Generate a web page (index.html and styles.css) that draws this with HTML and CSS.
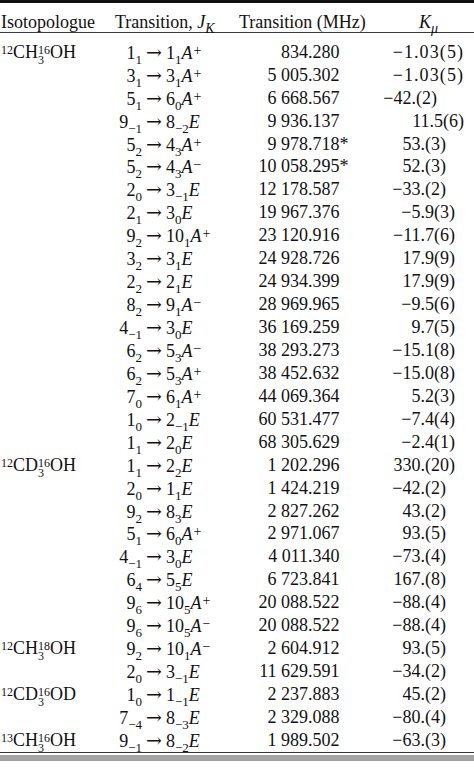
FILE: index.html
```html
<!DOCTYPE html>
<html>
<head>
<meta charset="utf-8">
<link rel="stylesheet" href="styles.css">
</head>
<body>
<div class="table">
  <div class="rule-top"></div>
  <div class="row head">
    <div class="c iso">Isotopologue</div>
    <div class="c trh">Transition, <i>J</i><sub class="hs"><i>K</i></sub></div>
    <div class="c fqh">Transition (MHz)</div>
    <div class="c kh"><i>K</i><sub class="hs"><i>μ</i></sub></div>
  </div>
  <div class="body">
    <div class="row"><div class="c iso"><sup>12</sup>CH<sub class="z">3</sub><sup>16</sup>OH</div><div class="c tr"><span class="jl">1<sub>1</sub></span><span class="ar">→</span>1<sub>1</sub><i>A</i><sup class="sg">+</sup></div><div class="c fq"><span class="ni">834</span>.280</div><div class="c k wide"><span class="ki">−1</span>.03(5)</div></div>
    <div class="row"><div class="c iso"></div><div class="c tr"><span class="jl">3<sub>1</sub></span><span class="ar">→</span>3<sub>1</sub><i>A</i><sup class="sg">+</sup></div><div class="c fq"><span class="ni">5 005</span>.302</div><div class="c k wide"><span class="ki">−1</span>.03(5)</div></div>
    <div class="row"><div class="c iso"></div><div class="c tr"><span class="jl">5<sub>1</sub></span><span class="ar">→</span>6<sub>0</sub><i>A</i><sup class="sg">+</sup></div><div class="c fq"><span class="ni">6 668</span>.567</div><div class="c k kl"><span class="ki">−42</span>.(2)</div></div>
    <div class="row"><div class="c iso"></div><div class="c tr"><span class="jl">9<sub>−1</sub></span><span class="ar">→</span>8<sub>−2</sub><i>E</i></div><div class="c fq"><span class="ni">9 936</span>.137</div><div class="c k kr"><span class="ki">11</span>.5(6)</div></div>
    <div class="row"><div class="c iso"></div><div class="c tr"><span class="jl">5<sub>2</sub></span><span class="ar">→</span>4<sub>3</sub><i>A</i><sup class="sg">+</sup></div><div class="c fq"><span class="ni">9 978</span>.718*</div><div class="c k"><span class="ki">53</span>.(3)</div></div>
    <div class="row"><div class="c iso"></div><div class="c tr"><span class="jl">5<sub>2</sub></span><span class="ar">→</span>4<sub>3</sub><i>A</i><sup class="sg">−</sup></div><div class="c fq"><span class="ni">10 058</span>.295*</div><div class="c k"><span class="ki">52</span>.(3)</div></div>
    <div class="row"><div class="c iso"></div><div class="c tr"><span class="jl">2<sub>0</sub></span><span class="ar">→</span>3<sub>−1</sub><i>E</i></div><div class="c fq"><span class="ni">12 178</span>.587</div><div class="c k"><span class="ki">−33</span>.(2)</div></div>
    <div class="row"><div class="c iso"></div><div class="c tr"><span class="jl">2<sub>1</sub></span><span class="ar">→</span>3<sub>0</sub><i>E</i></div><div class="c fq"><span class="ni">19 967</span>.376</div><div class="c k"><span class="ki">−5</span>.9(3)</div></div>
    <div class="row"><div class="c iso"></div><div class="c tr"><span class="jl">9<sub>2</sub></span><span class="ar">→</span>10<sub>1</sub><i>A</i><sup class="sg">+</sup></div><div class="c fq"><span class="ni">23 120</span>.916</div><div class="c k"><span class="ki">−11</span>.7(6)</div></div>
    <div class="row"><div class="c iso"></div><div class="c tr"><span class="jl">3<sub>2</sub></span><span class="ar">→</span>3<sub>1</sub><i>E</i></div><div class="c fq"><span class="ni">24 928</span>.726</div><div class="c k"><span class="ki">17</span>.9(9)</div></div>
    <div class="row"><div class="c iso"></div><div class="c tr"><span class="jl">2<sub>2</sub></span><span class="ar">→</span>2<sub>1</sub><i>E</i></div><div class="c fq"><span class="ni">24 934</span>.399</div><div class="c k"><span class="ki">17</span>.9(9)</div></div>
    <div class="row"><div class="c iso"></div><div class="c tr"><span class="jl">8<sub>2</sub></span><span class="ar">→</span>9<sub>1</sub><i>A</i><sup class="sg">−</sup></div><div class="c fq"><span class="ni">28 969</span>.965</div><div class="c k"><span class="ki">−9</span>.5(6)</div></div>
    <div class="row"><div class="c iso"></div><div class="c tr"><span class="jl">4<sub>−1</sub></span><span class="ar">→</span>3<sub>0</sub><i>E</i></div><div class="c fq"><span class="ni">36 169</span>.259</div><div class="c k"><span class="ki">9</span>.7(5)</div></div>
    <div class="row"><div class="c iso"></div><div class="c tr"><span class="jl">6<sub>2</sub></span><span class="ar">→</span>5<sub>3</sub><i>A</i><sup class="sg">−</sup></div><div class="c fq"><span class="ni">38 293</span>.273</div><div class="c k"><span class="ki">−15</span>.1(8)</div></div>
    <div class="row"><div class="c iso"></div><div class="c tr"><span class="jl">6<sub>2</sub></span><span class="ar">→</span>5<sub>3</sub><i>A</i><sup class="sg">+</sup></div><div class="c fq"><span class="ni">38 452</span>.632</div><div class="c k"><span class="ki">−15</span>.0(8)</div></div>
    <div class="row"><div class="c iso"></div><div class="c tr"><span class="jl">7<sub>0</sub></span><span class="ar">→</span>6<sub>1</sub><i>A</i><sup class="sg">+</sup></div><div class="c fq"><span class="ni">44 069</span>.364</div><div class="c k"><span class="ki">5</span>.2(3)</div></div>
    <div class="row"><div class="c iso"></div><div class="c tr"><span class="jl">1<sub>0</sub></span><span class="ar">→</span>2<sub>−1</sub><i>E</i></div><div class="c fq"><span class="ni">60 531</span>.477</div><div class="c k"><span class="ki">−7</span>.4(4)</div></div>
    <div class="row"><div class="c iso"></div><div class="c tr"><span class="jl">1<sub>1</sub></span><span class="ar">→</span>2<sub>0</sub><i>E</i></div><div class="c fq"><span class="ni">68 305</span>.629</div><div class="c k"><span class="ki">−2</span>.4(1)</div></div>
    <div class="row"><div class="c iso"><sup>12</sup>CD<sub class="z">3</sub><sup>16</sup>OH</div><div class="c tr"><span class="jl">1<sub>1</sub></span><span class="ar">→</span>2<sub>2</sub><i>E</i></div><div class="c fq"><span class="ni">1 202</span>.296</div><div class="c k"><span class="ki">330</span>.(20)</div></div>
    <div class="row"><div class="c iso"></div><div class="c tr"><span class="jl">2<sub>0</sub></span><span class="ar">→</span>1<sub>1</sub><i>E</i></div><div class="c fq"><span class="ni">1 424</span>.219</div><div class="c k"><span class="ki">−42</span>.(2)</div></div>
    <div class="row"><div class="c iso"></div><div class="c tr"><span class="jl">9<sub>2</sub></span><span class="ar">→</span>8<sub>3</sub><i>E</i></div><div class="c fq"><span class="ni">2 827</span>.262</div><div class="c k"><span class="ki">43</span>.(2)</div></div>
    <div class="row"><div class="c iso"></div><div class="c tr"><span class="jl">5<sub>1</sub></span><span class="ar">→</span>6<sub>0</sub><i>A</i><sup class="sg">+</sup></div><div class="c fq"><span class="ni">2 971</span>.067</div><div class="c k"><span class="ki">93</span>.(5)</div></div>
    <div class="row"><div class="c iso"></div><div class="c tr"><span class="jl">4<sub>−1</sub></span><span class="ar">→</span>3<sub>0</sub><i>E</i></div><div class="c fq"><span class="ni">4 011</span>.340</div><div class="c k"><span class="ki">−73</span>.(4)</div></div>
    <div class="row"><div class="c iso"></div><div class="c tr"><span class="jl">6<sub>4</sub></span><span class="ar">→</span>5<sub>5</sub><i>E</i></div><div class="c fq"><span class="ni">6 723</span>.841</div><div class="c k"><span class="ki">167</span>.(8)</div></div>
    <div class="row"><div class="c iso"></div><div class="c tr"><span class="jl">9<sub>6</sub></span><span class="ar">→</span>10<sub>5</sub><i>A</i><sup class="sg">+</sup></div><div class="c fq"><span class="ni">20 088</span>.522</div><div class="c k"><span class="ki">−88</span>.(4)</div></div>
    <div class="row"><div class="c iso"></div><div class="c tr"><span class="jl">9<sub>6</sub></span><span class="ar">→</span>10<sub>5</sub><i>A</i><sup class="sg">−</sup></div><div class="c fq"><span class="ni">20 088</span>.522</div><div class="c k"><span class="ki">−88</span>.(4)</div></div>
    <div class="row"><div class="c iso"><sup>12</sup>CH<sub class="z">3</sub><sup>18</sup>OH</div><div class="c tr"><span class="jl">9<sub>2</sub></span><span class="ar">→</span>10<sub>1</sub><i>A</i><sup class="sg">−</sup></div><div class="c fq"><span class="ni">2 604</span>.912</div><div class="c k"><span class="ki">93</span>.(5)</div></div>
    <div class="row"><div class="c iso"></div><div class="c tr"><span class="jl">2<sub>0</sub></span><span class="ar">→</span>3<sub>−1</sub><i>E</i></div><div class="c fq"><span class="ni">11 629</span>.591</div><div class="c k"><span class="ki">−34</span>.(2)</div></div>
    <div class="row"><div class="c iso"><sup>12</sup>CD<sub class="z">3</sub><sup>16</sup>OD</div><div class="c tr"><span class="jl">1<sub>0</sub></span><span class="ar">→</span>1<sub>−1</sub><i>E</i></div><div class="c fq"><span class="ni">2 237</span>.883</div><div class="c k"><span class="ki">45</span>.(2)</div></div>
    <div class="row"><div class="c iso"></div><div class="c tr"><span class="jl">7<sub>−4</sub></span><span class="ar">→</span>8<sub>−3</sub><i>E</i></div><div class="c fq"><span class="ni">2 329</span>.088</div><div class="c k"><span class="ki">−80</span>.(4)</div></div>
    <div class="row"><div class="c iso"><sup>13</sup>CH<sub class="z">3</sub><sup>16</sup>OH</div><div class="c tr"><span class="jl">9<sub>−1</sub></span><span class="ar">→</span>8<sub>−2</sub><i>E</i></div><div class="c fq"><span class="ni">1 989</span>.502</div><div class="c k"><span class="ki">−63</span>.(3)</div></div>
  </div>
  <div class="rule-b1"></div>
  <div class="rule-b2"></div>
</div>
</body>
</html>
```

FILE: styles.css
```css
html, body {
  margin: 0;
  padding: 0;
  background: #ffffff;
}

body {
  font-family: "Liberation Serif", "Times New Roman", serif;
  font-size: 18px;
  color: #111111;
}

.table {
  width: 474px;
}

.rule-top {
  height: 3px;
  background: #111111;
}

.row {
  display: grid;
  grid-template-columns: 110px 129px 130px 105px;
  height: 22.95px;
  line-height: 22.95px;
  white-space: pre;
}

.head {
  height: 20px;
  line-height: 20px;
  padding-top: 9px;
  border-bottom: 1px solid #3a3a3a;
}

.body {
  padding-top: 7.75px;
}

.iso {
  padding-left: 1px;
}

.trh {
  padding-left: 5px;
}

.fqh {
  padding-left: 0;
}

.kh {
  padding-left: 50px;
}

sub, sup {
  font-size: 13px;
  line-height: 0;
}

sub {
  vertical-align: -4.5px;
}

sup {
  vertical-align: 4px;
}

.iso sup {
  font-size: 12px;
}

sup.sg {
  vertical-align: 4px;
  font-size: 14px;
  margin-left: 1px;
}

.hs {
  font-size: 14px;
  vertical-align: -5px;
}

sub.z {
  display: inline-block;
  width: 0;
  font-size: 12px;
  vertical-align: -6px;
}

.jl {
  display: inline-block;
  width: 32px;
  text-align: right;
}

.ar {
  font-family: "DejaVu Serif", "DejaVu Sans", serif;
  font-size: 19px;
  margin: 0 4px 0 4px;
}

.ni {
  display: inline-block;
  width: 69px;
  text-align: right;
}

.ki {
  display: inline-block;
  width: 51.5px;
  text-align: right;
}

.k.wide {
  letter-spacing: 1.1px;
}

.k.wide .ki {
  width: 45px;
}

.k.kl .ki {
  width: 42.5px;
}

.k.kr .ki {
  width: 60.5px;
}

.rule-b1 {
  height: 1px;
  background: #333333;
}

.rule-b2 {
  margin-top: 2px;
  height: 6px;
  background: #a3a3a3;
}
```
